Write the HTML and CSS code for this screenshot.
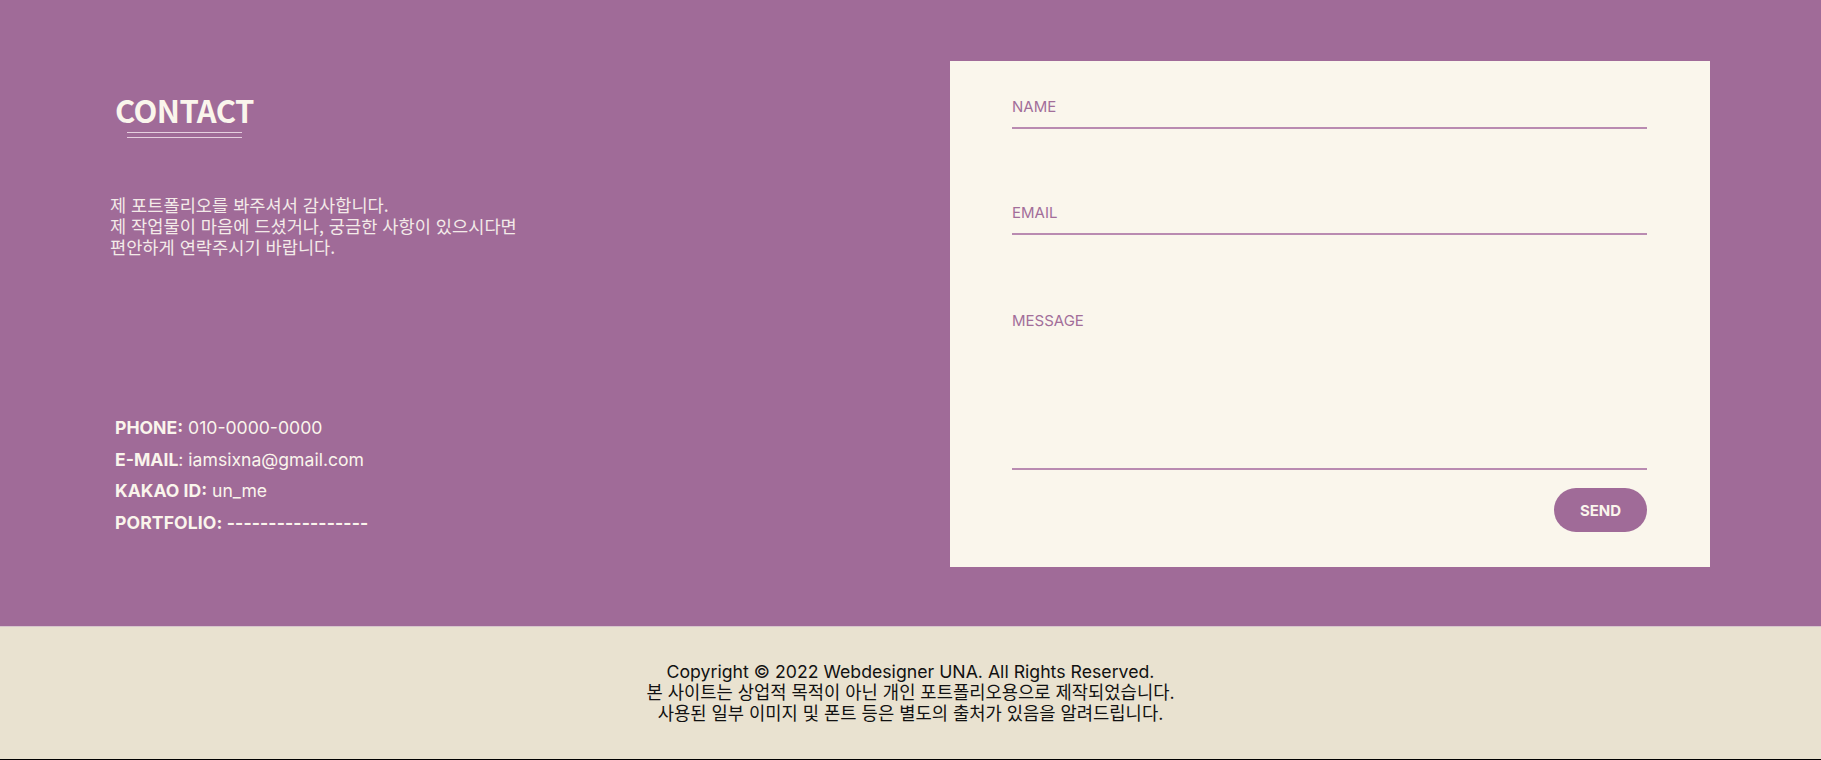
FILE: index.html
```html
<!DOCTYPE html>
<html lang="ko">
<head>
<meta charset="utf-8">
<title>Contact</title>
<link rel="stylesheet" href="styles.css">
</head>
<body>
<section class="contact">
  <div class="contact-info">
    <h2 class="title">CONTACT</h2>
    <p class="intro">제 포트폴리오를 봐주셔서 감사합니다.<br>제 작업물이 마음에 드셨거나, 궁금한 사항이 있으시다면<br>편안하게 연락주시기 바랍니다.</p>
    <ul class="details">
      <li><b>PHONE:</b> 010-0000-0000</li>
      <li><b>E-MAIL</b>: iamsixna@gmail.com</li>
      <li><b>KAKAO ID:</b> un_me</li>
      <li><b>PORTFOLIO: -----------------</b></li>
    </ul>
  </div>
  <form class="contact-form">
    <input class="field" type="text" placeholder="NAME">
    <input class="field" type="email" placeholder="EMAIL">
    <textarea class="field message" placeholder="MESSAGE"></textarea>
    <div class="actions"><button class="send" type="button">SEND</button></div>
  </form>
</section>
<footer class="footer">
  <p>Copyright © 2022 Webdesigner UNA. All Rights Reserved.<br>본 사이트는 상업적 목적이 아닌 개인 포트폴리오용으로 제작되었습니다.<br>사용된 일부 이미지 및 폰트 등은 별도의 출처가 있음을 알려드립니다.</p>
</footer>
</body>
</html>
```

FILE: styles.css
```css
* { box-sizing: border-box; }

html, body {
  margin: 0;
  padding: 0;
}

body {
  font-family: Inter, "Noto Sans CJK KR", sans-serif;
  background: #a06b98;
}

.contact {
  display: flex;
  justify-content: space-between;
  align-items: flex-start;
  padding: 61px 111px 59px 110px;
  background: #a06b98;
}

.contact-info {
  padding-top: 33px;
  color: #faf5ec;
}

.title {
  margin: 0 0 0 5px;
  font-family: "Noto Sans CJK KR", sans-serif;
  font-weight: 700;
  font-size: 31px;
  letter-spacing: -0.6px;
  line-height: 32px;
  color: #faf5ec;
}

.title::after {
  content: "";
  display: block;
  width: 115px;
  height: 4px;
  margin: 6px 0 0 12px;
  border-top: 1px solid #e6cfdf;
  border-bottom: 1px solid #e6cfdf;
}

.intro {
  margin: 56px 0 0 0;
  font-family: "Noto Sans CJK KR", sans-serif;
  font-size: 17.6px;
  line-height: 21px;
  color: #f3eae8;
}

.details {
  list-style: none;
  margin: 155px 0 0 5px;
  padding: 0;
  font-size: 17.6px;
  line-height: 31.6px;
  color: #faf5ec;
}

.details b {
  font-weight: 700;
}

.details li:last-child b {
  letter-spacing: 0.1px;
}

.contact-form {
  width: 760px;
  display: flex;
  flex-direction: column;
  padding: 24px 63px 35px 62px;
  background: #faf6ec;
}

.field {
  display: block;
  width: 100%;
  margin: 0;
  padding: 0;
  border: none;
  border-bottom: 2px solid #b98bb1;
  background: transparent;
  font-family: Inter, sans-serif;
  font-size: 15px;
  color: #a06b98;
  outline: none;
}

input.field {
  height: 44px;
}

input.field + .field {
  margin-top: 62px;
}

.field::placeholder {
  color: #a26e9a;
  opacity: 1;
}

.message {
  height: 173px;
  padding-top: 14px;
  resize: none;
}

.actions {
  display: flex;
  justify-content: flex-end;
  margin-top: 18px;
}

.send {
  width: 93px;
  height: 44px;
  border: none;
  border-radius: 22px;
  background: #a06b98;
  color: #faf5ec;
  font-family: Inter, sans-serif;
  font-weight: 700;
  font-size: 15px;
  cursor: pointer;
}

.footer {
  background: #e9e2d0;
  border-top: 1px solid #d7c5cc;
  border-bottom: 1px solid #000;
  padding: 34px 0 35px;
  text-align: center;
}

.footer p {
  margin: 0;
  font-family: Inter, "Noto Sans CJK KR", sans-serif;
  font-size: 17.7px;
  line-height: 21px;
  color: #111;
}
```
